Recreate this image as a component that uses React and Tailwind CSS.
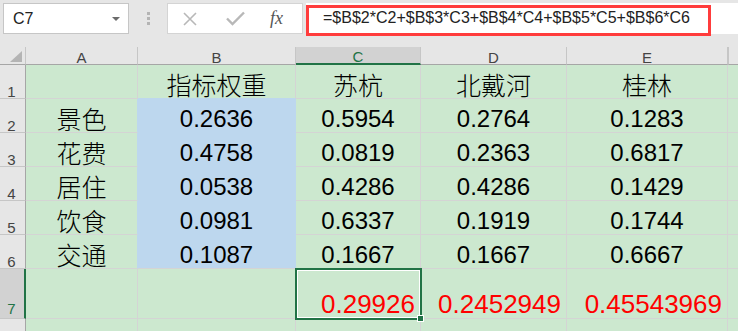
import React from "react";

const rows = [
  ["", "指标权重", "苏杭", "北戴河", "桂林"],
  ["景色", "0.2636", "0.5954", "0.2764", "0.1283"],
  ["花费", "0.4758", "0.0819", "0.2363", "0.6817"],
  ["居住", "0.0538", "0.4286", "0.4286", "0.1429"],
  ["饮食", "0.0981", "0.6337", "0.1919", "0.1744"],
  ["交通", "0.1087", "0.1667", "0.1667", "0.6667"],
];

const result = ["", "", "0.29926", "0.2452949", "0.45543969"];

const isChinese = (s) => /[\u4e00-\u9fff]/.test(s);

function cellBorder(r, c) {
  // filled blue range hides gridlines around it
  if (c === 1 && r >= 1 && r <= 4) return "bg-[#bdd7ee] border-r border-b border-[#bdd7ee]";
  if (c === 1 && r === 5) return "bg-[#bdd7ee] border-r border-b border-r-[#bdd7ee] border-b-[#d4d4d4]";
  if (c === 1 && r === 0) return "bg-[#cce8cf] border-r border-b border-r-[#d4d4d4] border-b-[#bdd7ee]";
  if (c === 0 && r >= 1 && r <= 5) return "bg-[#cce8cf] border-r border-b border-r-[#bdd7ee] border-b-[#d4d4d4]";
  return "bg-[#cce8cf] border-r border-b border-[#d4d4d4]";
}

function Toolbar() {
  return (
    <div className="h-[47px] bg-[#e6e6e6] flex items-start pt-[3px] relative">
      {/* Name box */}
      <div className="ml-[3px] w-[126px] h-[31px] bg-white border border-[#c6c6c6] flex items-center justify-between pl-[9px] pr-[8px]">
        <span className="text-[16px] text-[#222] font-['Liberation_Sans',sans-serif]">C7</span>
        <span className="w-0 h-0 border-l-[4px] border-r-[4px] border-t-[4px] border-l-transparent border-r-transparent border-t-[#6b6b6b]" />
      </div>
      {/* separator dots */}
      <div className="w-[38px] h-[31px] flex flex-col items-center justify-center gap-[2px]">
        <span className="w-[3px] h-[3px] bg-[#b4b4b4]" />
        <span className="w-[3px] h-[3px] bg-[#b4b4b4]" />
        <span className="w-[3px] h-[3px] bg-[#b4b4b4]" />
      </div>
      {/* cancel / enter / fx */}
      <div className="w-[136px] h-[31px] bg-white border border-[#d4d4d4] flex items-center pl-[14px] gap-[28px]">
        <svg width="16" height="16" viewBox="0 0 16 16">
          <path d="M2 2 L14 14 M14 2 L2 14" stroke="#b8b8b8" strokeWidth="1.6" fill="none" />
        </svg>
        <svg width="19" height="15" viewBox="0 0 19 15">
          <path d="M1 7.5 L6.5 13 L18 1.5" stroke="#b8b8b8" strokeWidth="2.4" fill="none" />
        </svg>
        <span className="text-[18px] italic text-[#555] font-['Liberation_Serif',serif] -ml-[3px]">fx</span>
      </div>
      {/* formula */}
      <div className="ml-[3px] flex-1 h-[31px] bg-white relative">
        <div className="absolute left-0 top-[2px] w-[405px] h-[31px] border-[3px] border-[#ff3c3c]" />
        <div className="pl-[17px] pt-[6px] text-[16px] leading-[18px] text-[#222] font-['Liberation_Sans',sans-serif]">
          =$B$2*C2+$B$3*C3+$B$4*C4+$B$5*C5+$B$6*C6
        </div>
      </div>
    </div>
  );
}

function ColHeader({ label, selected }) {
  if (selected) {
    return (
      <div className="bg-[#d2d2d2] border-r border-r-[#c6c6c6] border-b-2 border-b-[#217346] flex items-end justify-center leading-[13px] text-[15px] text-[#217346]">
        {label}
      </div>
    );
  }
  return (
    <div className="bg-[#e6e6e6] border-r border-b border-r-[#c6c6c6] border-b-[#a6a6a6] flex items-end justify-center leading-[13px] text-[15px] text-[#444]">
      {label}
    </div>
  );
}

function RowHeader({ n, selected }) {
  if (selected) {
    return (
      <div className="bg-[#d2d2d2] border-r-2 border-b border-r-[#217346] border-b-[#c6c6c6] flex items-end justify-center pr-[1px] pb-[3px] leading-[13px] text-[15px] text-[#217346]">
        {n}
      </div>
    );
  }
  return (
    <div className="bg-[#e6e6e6] border-r border-b border-r-[#a6a6a6] border-b-[#c6c6c6] flex items-end justify-center pr-[2px] leading-[13px] text-[15px] text-[#444]">
      {n}
    </div>
  );
}

export default function App() {
  return (
    <div className="w-[738px] h-[331px] overflow-hidden bg-[#e6e6e6] font-['Liberation_Sans','Noto_Sans_CJK_SC',sans-serif]">
      <Toolbar />
      <div className="grid grid-cols-[26px_112px_158px_125px_146px_161px_1fr] grid-rows-[18px_34px_34px_34px_34px_34px_34px_50px_20px]">
        {/* corner */}
        <div className="bg-[#e6e6e6] border-r border-b border-r-[#c6c6c6] border-b-[#a6a6a6] flex items-end justify-end pr-[3px] pb-[2px]">
          <svg width="12" height="11" viewBox="0 0 12 11">
            <polygon points="12,0 12,11 0,11" fill="#b4b4b4" />
          </svg>
        </div>
        <ColHeader label="A" />
        <ColHeader label="B" />
        <ColHeader label="C" selected />
        <ColHeader label="D" />
        <ColHeader label="E" />
        <div className="bg-[#e6e6e6] border-b border-b-[#a6a6a6] border-l border-l-[#c6c6c6]" />

        {rows.map((row, r) => (
          <React.Fragment key={r}>
            <RowHeader n={r + 1} />
            {row.map((v, c) => (
              <div key={c} className={`${cellBorder(r, c)} flex items-end justify-center`}>
                {isChinese(v) ? (
                  <span className="text-[25px] leading-[25px] pb-[1px] font-light text-black font-['Noto_Sans_CJK_SC',sans-serif]">{v}</span>
                ) : (
                  <span className="text-[24px] leading-none pb-[1px] text-black">{v}</span>
                )}
              </div>
            ))}
            <div className="bg-[#cce8cf] border-b border-[#d4d4d4]" />
          </React.Fragment>
        ))}

        <RowHeader n={7} selected />
        {result.map((v, c) => (
          <div key={c} className={`bg-[#cce8cf] border-r border-b border-[#d4d4d4] flex items-end justify-end pr-[5px] ${c === 2 ? "relative" : ""}`}>
            <span className="text-[26px] leading-none pb-[1px] text-[#ff0000]">{v}</span>
            {c === 2 && (
              <div className="absolute -left-[1px] -top-[1px] -right-[2px] -bottom-[2px] border-2 border-[#217346]">
                <div className="w-full h-full border border-white" />
                <div className="absolute -right-[4px] -bottom-[4px] w-[7px] h-[7px] bg-[#217346] border border-white" />
              </div>
            )}
          </div>
        ))}
        <div className="bg-[#cce8cf] border-b border-[#d4d4d4]" />

        <div className="bg-[#e6e6e6] border-r border-r-[#a6a6a6]" />
        <div className="bg-[#cce8cf] border-r border-[#d4d4d4]" />
        <div className="bg-[#cce8cf] border-r border-[#d4d4d4]" />
        <div className="bg-[#cce8cf] border-r border-[#d4d4d4]" />
        <div className="bg-[#cce8cf] border-r border-[#d4d4d4]" />
        <div className="bg-[#cce8cf] border-r border-[#d4d4d4]" />
        <div className="bg-[#cce8cf]" />
      </div>
    </div>
  );
}
